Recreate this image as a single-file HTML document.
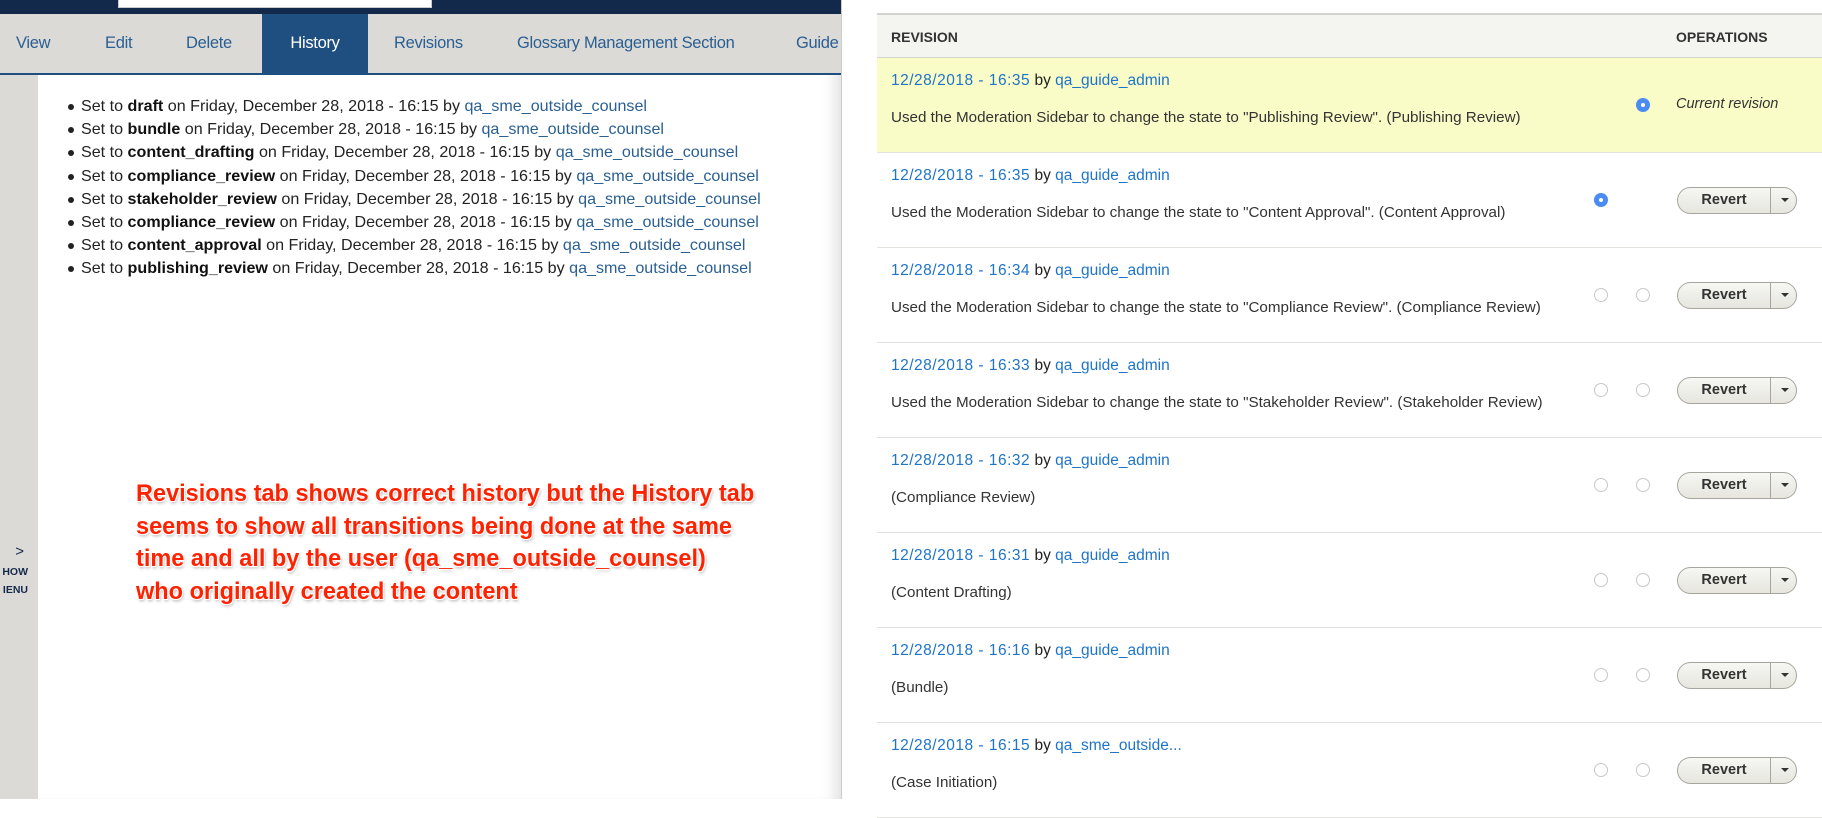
<!DOCTYPE html>
<html><head><meta charset="utf-8">
<style>
*{box-sizing:border-box;margin:0;padding:0}
body{width:1822px;height:799px;overflow:hidden;background:#fff;font-family:"Liberation Sans",sans-serif;position:relative}
#left{position:absolute;left:0;top:0;width:842px;height:799px;background:#fff;overflow:hidden;border-right:1px solid #ccc;box-shadow:inset -14px 0 14px -8px rgba(0,0,0,.12);z-index:2}
#nav{position:absolute;left:0;top:0;width:842px;height:14px;background:#13294b}
#nav .box{position:absolute;left:118px;top:0;width:314px;height:8px;background:#fff;border:1px solid #ccc;border-top:none}
#tabs{position:absolute;left:0;top:14px;width:842px;height:61px;background:#dcdad6;border-bottom:2px solid #1f4f80}
#tabs span{position:absolute;top:0;height:59px;line-height:59px;font-size:16.5px;color:#2a5f92;letter-spacing:-0.3px}
#tabs span.act{background:#1f4f80;color:#fff;text-align:center}
#strip{position:absolute;left:0;top:75px;width:38px;height:724px;background:#dcdad6}
#strip div{position:absolute;left:0;width:38px;color:#13294b;font-size:10.5px;font-weight:bold;text-align:right;padding-right:10px}
ul{position:absolute;left:81px;top:95px;list-style:none}
li{font-size:16.1px;line-height:23.2px;color:#222;white-space:nowrap;position:relative}
li:before{content:"";position:absolute;left:-13px;top:9px;width:6px;height:6px;border-radius:50%;background:#222}
li b{color:#111}
li a{color:#2a5f92;text-decoration:none}
#note{position:absolute;left:136px;top:478px;font-weight:bold;font-size:24px;line-height:32.5px;color:#ff2200;white-space:nowrap;transform:scaleX(0.98);transform-origin:0 0;
text-shadow:1px 1px 0 #fff,-1px -1px 0 #fff,1px -1px 0 #fff,-1px 1px 0 #fff,1px 2px 3px rgba(0,0,0,.35)}
#right{position:absolute;left:877px;top:0;width:945px;height:799px}
#hdr{position:absolute;left:0;top:13px;width:945px;height:45px;background:#f4f4f1;border-top:2px solid #d3d3d0;border-bottom:1px solid #d3d3d0}
#hdr span{position:absolute;top:14px;font-size:14px;font-weight:bold;color:#333}
.row{position:absolute;left:0;width:945px;height:95px;border-bottom:1px solid #e2e2de}
.row .d{position:absolute;left:14px;top:14px;font-size:15.5px;color:#222}
.row .d a{color:#1e74c9;text-decoration:none;letter-spacing:.5px}
.row .d a.u{letter-spacing:0}
.row .t{position:absolute;left:14px;top:51px;font-size:15.2px;color:#333}
.rad{position:absolute;width:14px;height:14px;border-radius:50%;border:1px solid #c8c8c8;background:#fff;top:40px}
.rad.on{border:none;background:#4a8cf2}
.rad.on:after{content:"";position:absolute;left:5px;top:5px;width:4px;height:4px;border-radius:50%;background:#fff}
.btn{position:absolute;left:800px;top:34px;width:120px;height:27px;border:1px solid #a6a69e;border-radius:14px;background:linear-gradient(#f7f7f3,#e6e6df);font-size:14.5px;font-weight:bold;color:#333}
.btn .l{position:absolute;left:0;width:92px;text-align:center;line-height:25px}
.btn .s{position:absolute;left:92px;top:0;width:1px;height:25px;background:#a6a69e}
.btn .a{position:absolute;left:103px;top:10px;border-left:4px solid transparent;border-right:4px solid transparent;border-top:4px solid #333}
</style></head><body>
<div id="left">
<div id="nav"><div class="box"></div></div>
<div id="tabs">
<span style="left:16px">View</span>
<span style="left:105px">Edit</span>
<span style="left:186px">Delete</span>
<span class="act" style="left:262px;width:106px">History</span>
<span style="left:394px">Revisions</span>
<span style="left:517px">Glossary Management Section</span>
<span style="left:796px">Guide</span>
</div>
<div id="strip">
<div style="top:468px;font-size:15px;font-weight:normal;padding-right:14px">&gt;</div>
<div style="top:491px">HOW</div>
<div style="top:509px">IENU</div>
</div>
<ul>
<li>Set to <b>draft</b> on Friday, December 28, 2018 - 16:15 by <a>qa_sme_outside_counsel</a></li>
<li>Set to <b>bundle</b> on Friday, December 28, 2018 - 16:15 by <a>qa_sme_outside_counsel</a></li>
<li>Set to <b>content_drafting</b> on Friday, December 28, 2018 - 16:15 by <a>qa_sme_outside_counsel</a></li>
<li>Set to <b>compliance_review</b> on Friday, December 28, 2018 - 16:15 by <a>qa_sme_outside_counsel</a></li>
<li>Set to <b>stakeholder_review</b> on Friday, December 28, 2018 - 16:15 by <a>qa_sme_outside_counsel</a></li>
<li>Set to <b>compliance_review</b> on Friday, December 28, 2018 - 16:15 by <a>qa_sme_outside_counsel</a></li>
<li>Set to <b>content_approval</b> on Friday, December 28, 2018 - 16:15 by <a>qa_sme_outside_counsel</a></li>
<li>Set to <b>publishing_review</b> on Friday, December 28, 2018 - 16:15 by <a>qa_sme_outside_counsel</a></li>
</ul>
<div id="note">Revisions tab shows correct history but the History tab<br>seems to show all transitions being done at the same<br>time and all by the user (qa_sme_outside_counsel)<br>who originally created the content</div>
</div>

<div id="right">
<div id="hdr"><span style="left:14px">REVISION</span><span style="left:799px">OPERATIONS</span></div>

<div class="row" style="top:58px;background:#fafcc8">
<div class="d"><a>12/28/2018 - 16:35</a> by <a class="u">qa_guide_admin</a></div>
<div class="t">Used the Moderation Sidebar to change the state to "Publishing Review". (Publishing Review)</div>
<div class="rad on" style="left:759px"></div>
<div style="position:absolute;left:799px;top:38px;font-size:14.5px;font-style:italic;color:#333">Current revision</div>
</div>

<div class="row" style="top:153px">
<div class="d"><a>12/28/2018 - 16:35</a> by <a class="u">qa_guide_admin</a></div>
<div class="t">Used the Moderation Sidebar to change the state to "Content Approval". (Content Approval)</div>
<div class="rad on" style="left:717px"></div>
<div class="btn"><span class="l">Revert</span><span class="s"></span><span class="a"></span></div>
</div>

<div class="row" style="top:248px">
<div class="d"><a>12/28/2018 - 16:34</a> by <a class="u">qa_guide_admin</a></div>
<div class="t">Used the Moderation Sidebar to change the state to "Compliance Review". (Compliance Review)</div>
<div class="rad" style="left:717px"></div><div class="rad" style="left:759px"></div>
<div class="btn"><span class="l">Revert</span><span class="s"></span><span class="a"></span></div>
</div>

<div class="row" style="top:343px">
<div class="d"><a>12/28/2018 - 16:33</a> by <a class="u">qa_guide_admin</a></div>
<div class="t">Used the Moderation Sidebar to change the state to "Stakeholder Review". (Stakeholder Review)</div>
<div class="rad" style="left:717px"></div><div class="rad" style="left:759px"></div>
<div class="btn"><span class="l">Revert</span><span class="s"></span><span class="a"></span></div>
</div>

<div class="row" style="top:438px">
<div class="d"><a>12/28/2018 - 16:32</a> by <a class="u">qa_guide_admin</a></div>
<div class="t">(Compliance Review)</div>
<div class="rad" style="left:717px"></div><div class="rad" style="left:759px"></div>
<div class="btn"><span class="l">Revert</span><span class="s"></span><span class="a"></span></div>
</div>

<div class="row" style="top:533px">
<div class="d"><a>12/28/2018 - 16:31</a> by <a class="u">qa_guide_admin</a></div>
<div class="t">(Content Drafting)</div>
<div class="rad" style="left:717px"></div><div class="rad" style="left:759px"></div>
<div class="btn"><span class="l">Revert</span><span class="s"></span><span class="a"></span></div>
</div>

<div class="row" style="top:628px">
<div class="d"><a>12/28/2018 - 16:16</a> by <a class="u">qa_guide_admin</a></div>
<div class="t">(Bundle)</div>
<div class="rad" style="left:717px"></div><div class="rad" style="left:759px"></div>
<div class="btn"><span class="l">Revert</span><span class="s"></span><span class="a"></span></div>
</div>

<div class="row" style="top:723px">
<div class="d"><a>12/28/2018 - 16:15</a> by <a class="u">qa_sme_outside...</a></div>
<div class="t">(Case Initiation)</div>
<div class="rad" style="left:717px"></div><div class="rad" style="left:759px"></div>
<div class="btn"><span class="l">Revert</span><span class="s"></span><span class="a"></span></div>
</div>
</div>
</body></html>
